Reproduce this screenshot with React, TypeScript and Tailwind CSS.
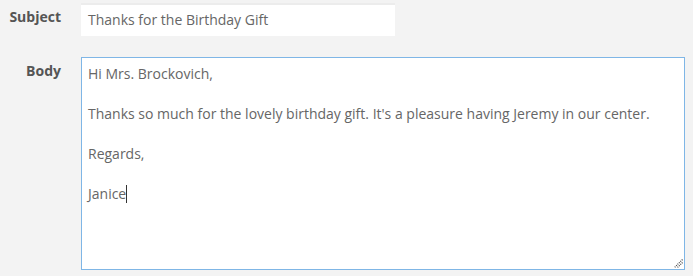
import React from "react";

export default function App() {
  return (
    <div className="w-[693px] h-[276px] bg-[#f3f3f3] overflow-hidden text-[14px]" style={{ fontFamily: '"Open Sans", sans-serif' }}>
      <div className="flex items-start pt-[3px]">
        <div className="w-[61px] text-right font-bold text-[#555555] pt-[4px] leading-[20px]">Subject</div>
        <div className="ml-[20px] w-[314px] h-[33px] bg-white shadow-[inset_0_2px_0_#ececec] px-[7px] flex items-center text-[#666666]">
          Thanks for the Birthday Gift
        </div>
      </div>
      <div className="flex items-start mt-[21px]">
        <div className="w-[61px] text-right font-bold text-[#555555] pt-[4px] leading-[20px]">Body</div>
        <div className="relative ml-[20px] w-[604px] h-[213px] bg-white border border-[#7fb6e6] px-[6px] pt-[6px] text-[#666666] leading-[20px]">
          <div>Hi Mrs. Brockovich,</div>
          <div className="h-[20px]" />
          <div>Thanks so much for the lovely birthday gift. It's a pleasure having Jeremy in our center.</div>
          <div className="h-[20px]" />
          <div>Regards,</div>
          <div className="h-[20px]" />
          <div className="flex items-center">
            Janice<span className="inline-block w-px h-[18px] bg-[#333333]" />
          </div>
          <svg className="absolute right-[1px] bottom-[1px]" width="10" height="10" viewBox="0 0 10 10">
            <path d="M9.5 1.5 L1.5 9.5" stroke="#444" strokeWidth="1.2" strokeDasharray="1 1" />
            <path d="M9.5 4.5 L4.5 9.5" stroke="#444" strokeWidth="1.2" strokeDasharray="1 1" />
          </svg>
        </div>
      </div>
    </div>
  );
}
